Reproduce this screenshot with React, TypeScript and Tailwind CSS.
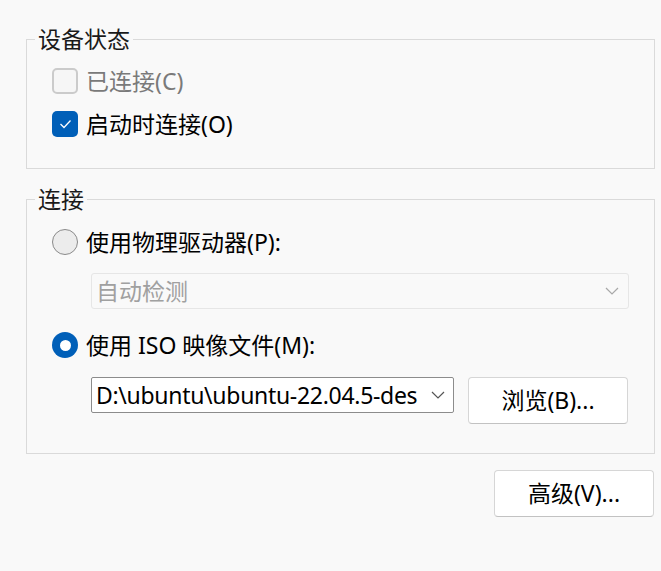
import React from 'react';

const font = { fontFamily: '"Noto Sans", "Noto Sans CJK SC", sans-serif' };

function Chevron({ color }: { color: string }) {
  return (
    <svg width="14" height="8" viewBox="0 0 14 8" fill="none">
      <path d="M1 1l6 6 6-6" stroke={color} strokeWidth="1.2" />
    </svg>
  );
}

function CheckBox({ checked, disabled }: { checked?: boolean; disabled?: boolean }) {
  if (checked) {
    return (
      <span className="flex h-[26px] w-[26px] items-center justify-center rounded-[5px] bg-[#005fb8]">
        <svg width="13" height="10" viewBox="0 0 13 10" fill="none">
          <path d="M1.5 5l3.5 3.5L11.5 1.5" stroke="#fff" strokeWidth="1.3" />
        </svg>
      </span>
    );
  }
  return (
    <span
      className={`h-[26px] w-[26px] rounded-[5px] border-2 ${
        disabled ? 'border-[#cbcbcb] bg-[#f6f6f6]' : 'border-[#878787] bg-[#f3f3f3]'
      }`}
    />
  );
}

function Radio({ checked }: { checked?: boolean }) {
  if (checked) {
    return (
      <span className="flex h-[26px] w-[26px] items-center justify-center rounded-full bg-[#005fb8]">
        <span className="h-[11px] w-[11px] rounded-full bg-white" />
      </span>
    );
  }
  return <span className="h-[26px] w-[26px] rounded-full border-[1.5px] border-[#8a8a8a] bg-[#ececec]" />;
}

export default function App() {
  return (
    <div className="h-[571px] w-[661px] overflow-hidden bg-[#f9f9f9] pt-[26px] text-[23px] text-black" style={font}>
      <fieldset className="ml-[26px] w-[629px] border border-[#dadada] pb-[27px] pt-[12px]">
        <legend className="ml-[8px] px-[3px] leading-[26px] text-[#1a1a1a]">设备状态</legend>
        <div className="flex flex-col gap-[9px] pl-[25px]">
          <div className="flex h-[34px] items-center gap-[8px] text-[#7a7a7a]">
            <CheckBox disabled />
            <span>已连接(C)</span>
          </div>
          <div className="flex h-[34px] items-center gap-[8px]">
            <CheckBox checked />
            <span>启动时连接(O)</span>
          </div>
        </div>
      </fieldset>

      <fieldset className="ml-[26px] mt-[17px] w-[629px] border border-[#dadada] pb-[29px] pt-[13px]">
        <legend className="ml-[8px] px-[3px] leading-[26px] text-[#1a1a1a]">连接</legend>
        <div className="pl-[25px]">
          <div className="flex h-[34px] items-center gap-[8px]">
            <Radio />
            <span>使用物理驱动器(P):</span>
          </div>
          <div className="ml-[39px] mt-[14px] flex h-[36px] w-[538px] items-center justify-between rounded-[3px] border border-[#e6e6e6] bg-[#f9f9f9] pl-[4px] pr-[9px] text-[#a0a0a0]">
            <span>自动检测</span>
            <Chevron color="#a8a8a8" />
          </div>
          <div className="mt-[19px] flex h-[34px] items-center gap-[8px]">
            <Radio checked />
            <span>使用 ISO 映像文件(M):</span>
          </div>
          <div className="ml-[39px] mt-[15px] flex items-start gap-[14px]">
            <div className="flex h-[36px] w-[363px] items-center justify-between rounded-[2px] border border-[#8c8c8c] bg-white pl-[4px] pr-[8px]">
              <span className="whitespace-nowrap tracking-[-0.3px]">D:\ubuntu\ubuntu-22.04.5-des</span>
              <Chevron color="#555" />
            </div>
            <button className="h-[47px] w-[160px] rounded-[4px] border border-[#d6d6d6] border-b-[#c2c2c2] bg-white">
              浏览(B)...
            </button>
          </div>
        </div>
      </fieldset>

      <div className="ml-[494px] mt-[16px]">
        <button className="h-[47px] w-[160px] rounded-[4px] border border-[#d6d6d6] border-b-[#c2c2c2] bg-white">
          高级(V)...
        </button>
      </div>
    </div>
  );
}
